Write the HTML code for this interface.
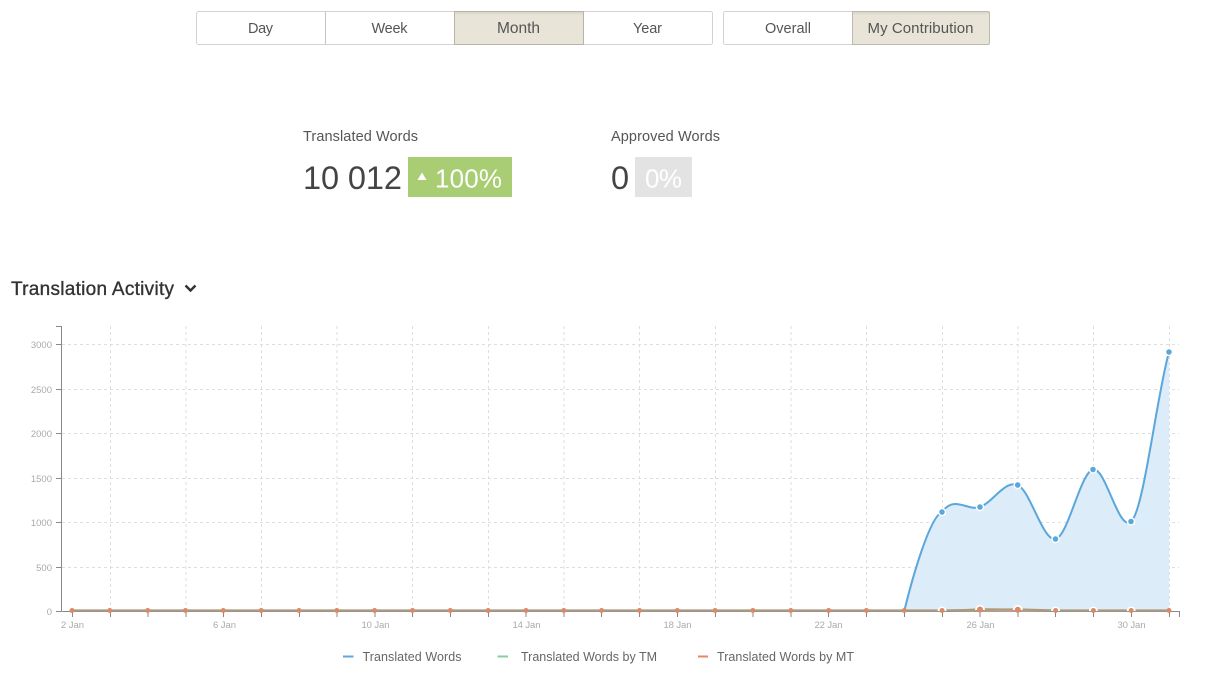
<!DOCTYPE html>
<html lang="en">
<head>
<meta charset="utf-8">
<title>Translation Activity</title>
<style>
html,body{margin:0;padding:0;background:#fff;}
body{width:1206px;height:676px;overflow:hidden;position:relative;font-family:"Liberation Sans",sans-serif;}
svg{position:absolute;left:0;top:0;display:block;}
svg text{font-family:"Liberation Sans",sans-serif;}
.b{fill:#555;font-size:14.5px;text-anchor:middle;}
.yl{fill:#aaa;font-size:9.5px;text-anchor:end;}
.xl{fill:#aaa;font-size:9.5px;text-anchor:middle;}
.lg{fill:#666;font-size:12.5px;}
</style>
</head>
<body>
<svg width="1206" height="676" viewBox="0 0 1206 676" xmlns="http://www.w3.org/2000/svg">
<defs>
<linearGradient id="sh" x1="0" y1="0" x2="0" y2="1"><stop offset="0" stop-color="#d6d2c5"/><stop offset=".12" stop-color="#e8e4d8"/><stop offset="1" stop-color="#e8e4d8"/></linearGradient>
</defs>
<!-- button groups -->
<rect x="196.5" y="11.5" width="516" height="33" rx="2" fill="#fff" stroke="#d2d2d2"/>
<rect x="454.5" y="11.5" width="129" height="33" fill="url(#sh)" stroke="#b8b5a8"/>
<path d="M325.5 12V44" stroke="#c4c4c4" fill="none"/>
<rect x="723.5" y="11.5" width="266" height="33" rx="2" fill="#fff" stroke="#d2d2d2"/>
<path d="M852.5 11.500H988a1.5 1.5 0 0 1 1.5 1.500V43a1.500 1.500 0 0 1-1.500 1.500H852.500Z" fill="url(#sh)" stroke="#bdbaad"/>
<text class="b" x="260.500" y="33" textLength="25">Day</text>
<text class="b" x="389.500" y="33" textLength="36">Week</text>
<text class="b" x="518.500" y="33" style="font-size:15.500px" textLength="43">Month</text>
<text class="b" x="647.500" y="33" textLength="29">Year</text>
<text class="b" x="788" y="33" textLength="46">Overall</text>
<text class="b" x="920.500" y="33" style="font-size:15px" textLength="106">My Contribution</text>
<!-- stats -->
<text x="303" y="141" font-size="14.500" fill="#555" textLength="115">Translated Words</text>
<text x="611" y="141" font-size="14.500" fill="#555" textLength="109">Approved Words</text>
<text x="303" y="189" font-size="32.500" fill="#444" textLength="99">10 012</text>
<rect x="408" y="157" width="104" height="40" fill="#a9cd72"/>
<path d="M417.500 180L422 172.500L426.500 180Z" fill="#fff"/>
<text x="435" y="187.500" font-size="26" fill="#fff" textLength="67">100%</text>
<text x="611" y="189" font-size="32.500" fill="#444" textLength="18">0</text>
<rect x="635" y="157" width="57" height="40" fill="#e3e3e3"/>
<text x="645" y="187.500" font-size="26" fill="#fff" textLength="37">0%</text>
<!-- title -->
<text x="11" y="295" font-size="19" fill="#333" stroke="#333" stroke-width=".35" textLength="163">Translation Activity</text>
<path d="M185.500 285.500L190.500 290.500L195.500 285.500" fill="none" stroke="#333" stroke-width="2.400"/>
<!-- grid -->
<g stroke="#dedede" stroke-width="1" stroke-dasharray="3 3" fill="none">
<path d="M62 344.500H1179M62 389.500H1179M62 433.500H1179M62 478.500H1179M62 522.500H1179M62 567.500H1179"/>
<path d="M110.500 326V611M186 326V611M261.500 326V611M337 326V611M412.500 326V611M488.500 326V611M564 326V611M639.500 326V611M715.500 326V611M791 326V611M866.500 326V611M942.500 326V611M1018 326V611M1093.500 326V611M1169.500 326V611"/>
</g>
<!-- area + line -->
<path d="M904.300 611C913 575 930 517 942 512C954.600 494.700 967.400 511.500 980 507C992.600 502.500 1005.100 479.700 1017.700 485C1030.300 490.300 1042.900 541.600 1055.500 539C1068.100 536.400 1080.400 472.400 1093 469.500C1105.600 466.600 1118.400 532 1131 521.500C1143.600 512 1156.400 397 1169 352V611Z" fill="#dcecf8"/>
<path d="M904.300 611C913 575 930 517 942 512C954.600 494.700 967.400 511.500 980 507C992.600 502.500 1005.100 479.700 1017.700 485C1030.300 490.300 1042.900 541.600 1055.500 539C1068.100 536.400 1080.400 472.400 1093 469.500C1105.600 466.600 1118.400 532 1131 521.500C1143.600 512 1156.400 397 1169 352" fill="none" stroke="#5ba6da" stroke-width="2"/>
<!-- axes -->
<g stroke="#888" stroke-width="1" fill="none">
<path d="M56 326.500H61.500V611.500M56 344.500H61M56 389.500H61M56 433.500H61M56 478.500H61M56 522.500H61M56 567.500H61M56 611.500H61"/>
<path d="M61.500 611.500H1179.500V617"/>
<path d="M72.500 611V617M110.500 611V617M148 611V617M186 611V617M223.500 611V617M261.500 611V617M299.500 611V617M337 611V617M375 611V617M412.500 611V617M450.500 611V617M488.500 611V617M526 611V617M564 611V617M601.500 611V617M639.500 611V617M677.500 611V617M715.500 611V617M753 611V617M791 611V617M828.500 611V617M866.500 611V617M904.500 611V617M942.500 611V617M980 611V617M1018 611V617M1055.500 611V617M1093.500 611V617M1131.500 611V617M1169.500 611V617"/>
</g>
<!-- small series -->
<path d="M942 611L980 607.800L1018 608.800L1056 610.500V611H942Z" fill="#a8cfa0"/>
<path d="M942 611L980 608.600L1018 608.400L1056 610.600V611.500H942Z" fill="#e9a888"/>
<path d="M72 610.500H942L980 609.800L1018 609.500L1056 610.500H1169" fill="none" stroke="#ab9a82" stroke-width="2.200"/>
<!-- blue markers -->
<g fill="#5ba6da" stroke="#fff" stroke-width="1.500">
<circle cx="942" cy="512" r="3.500"/><circle cx="980" cy="507" r="3.500"/><circle cx="1017.700" cy="485" r="3.500"/><circle cx="1055.500" cy="539" r="3.500"/><circle cx="1093" cy="469.500" r="3.500"/><circle cx="1131" cy="521.500" r="3.500"/><circle cx="1169" cy="352" r="3.500"/>
</g>
<!-- white halos on baseline -->
<g fill="#fff">
<path d="M937.500 611a4.500 4.500 0 0 1 9 0ZM975 610a5 5 0 0 1 10 0ZM1012.800 610a5 5 0 0 1 10 0ZM1051.100 611a4.500 4.500 0 0 1 9 0ZM1088.900 611a4.500 4.500 0 0 1 9 0ZM1126.700 611a4.500 4.500 0 0 1 9 0Z"/>
</g>
<!-- orange markers -->
<g fill="#d98a66">
<circle cx="72" cy="610.500" r="2.500"/><circle cx="109.800" cy="610.500" r="2.500"/><circle cx="147.700" cy="610.500" r="2.500"/><circle cx="185.500" cy="610.500" r="2.500"/><circle cx="223.300" cy="610.500" r="2.500"/><circle cx="261.200" cy="610.500" r="2.500"/><circle cx="299" cy="610.500" r="2.500"/><circle cx="336.800" cy="610.500" r="2.500"/><circle cx="374.600" cy="610.500" r="2.500"/><circle cx="412.500" cy="610.500" r="2.500"/><circle cx="450.300" cy="610.500" r="2.500"/><circle cx="488.100" cy="610.500" r="2.500"/><circle cx="526" cy="610.500" r="2.500"/><circle cx="563.800" cy="610.500" r="2.500"/><circle cx="601.600" cy="610.500" r="2.500"/><circle cx="639.500" cy="610.500" r="2.500"/><circle cx="677.300" cy="610.500" r="2.500"/><circle cx="715.100" cy="610.500" r="2.500"/><circle cx="752.900" cy="610.500" r="2.500"/><circle cx="790.800" cy="610.500" r="2.500"/><circle cx="828.600" cy="610.500" r="2.500"/><circle cx="866.400" cy="610.500" r="2.500"/><circle cx="904.300" cy="610.500" r="2.500"/><circle cx="942.100" cy="610.500" r="2.500"/><circle cx="980" cy="609.500" r="3"/><circle cx="1017.800" cy="609.800" r="3"/><circle cx="1055.600" cy="610.500" r="2.500"/><circle cx="1093.400" cy="610.500" r="2.500"/><circle cx="1131.200" cy="610.500" r="2.500"/><circle cx="1169" cy="610.500" r="2.500"/>
</g>
<!-- axis labels -->
<text class="yl" x="52" y="348">3000</text>
<text class="yl" x="52" y="393">2500</text>
<text class="yl" x="52" y="437">2000</text>
<text class="yl" x="52" y="482">1500</text>
<text class="yl" x="52" y="526">1000</text>
<text class="yl" x="52" y="571">500</text>
<text class="yl" x="52" y="615">0</text>
<text class="xl" x="72.500" y="628" textLength="23">2 Jan</text>
<text class="xl" x="224.500" y="628" textLength="23">6 Jan</text>
<text class="xl" x="375.500" y="628" textLength="28">10 Jan</text>
<text class="xl" x="526.500" y="628" textLength="28">14 Jan</text>
<text class="xl" x="677.500" y="628" textLength="28">18 Jan</text>
<text class="xl" x="828.500" y="628" textLength="28">22 Jan</text>
<text class="xl" x="980.500" y="628" textLength="28">26 Jan</text>
<text class="xl" x="1131.500" y="628" textLength="28">30 Jan</text>
<!-- legend -->
<path d="M343 656.500H353.500" stroke="#62a5d8" stroke-width="2"/>
<text class="lg" x="362.500" y="661" textLength="99">Translated Words</text>
<path d="M497.500 656.500H508" stroke="#8fcaa4" stroke-width="2"/>
<text class="lg" x="521" y="661" textLength="136">Translated Words by TM</text>
<path d="M698 656.500H708" stroke="#e08a60" stroke-width="2"/>
<text class="lg" x="717" y="661" textLength="137">Translated Words by MT</text>
</svg>
</body>
</html>
